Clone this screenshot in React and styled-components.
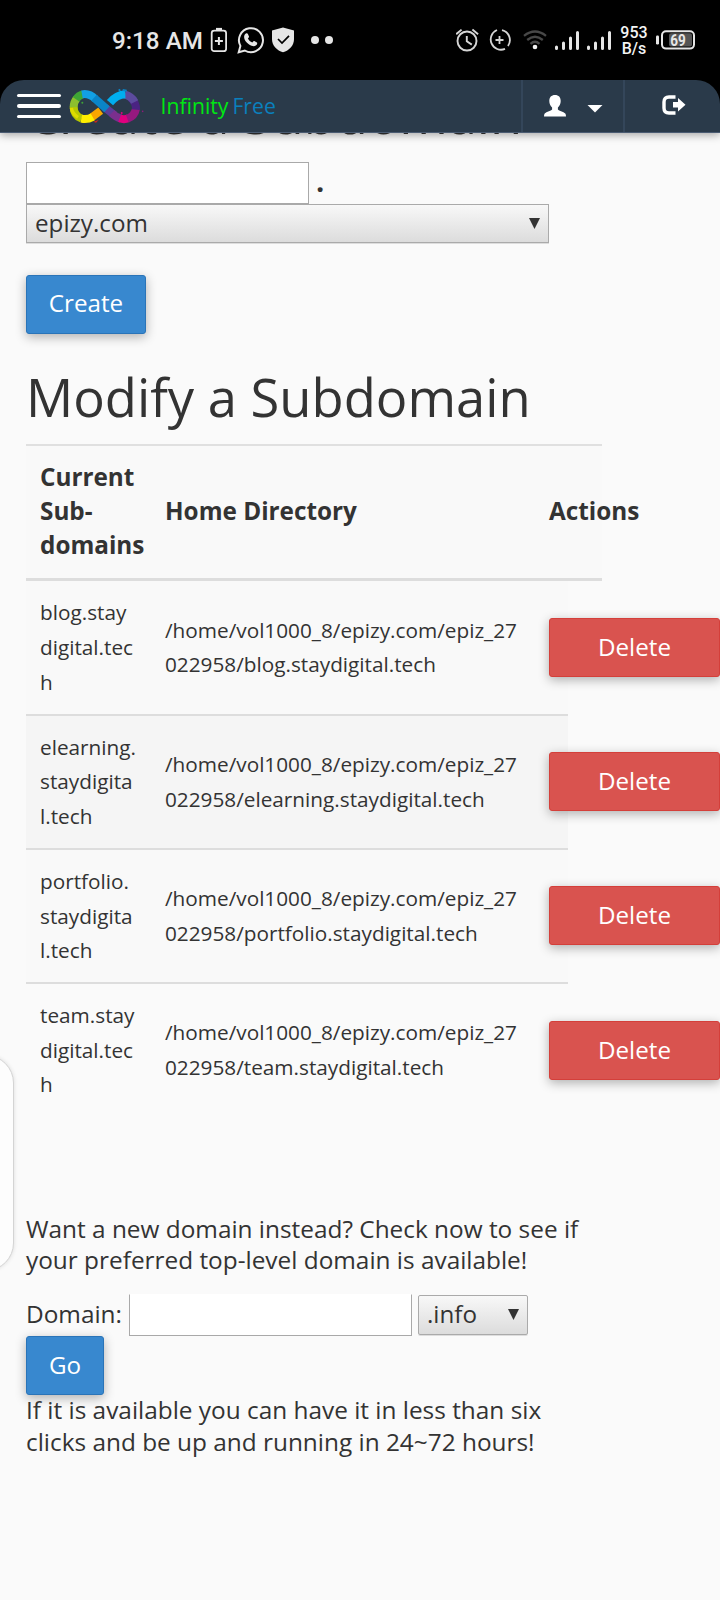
import React from 'react';
import styled, { createGlobalStyle } from 'styled-components';

const GlobalStyle = createGlobalStyle`
  * {
    box-sizing: border-box;
  }

  body {
    margin: 0;
    background: #fafafa;
    color: #333;
    font-family: 'Open Sans', 'Noto Sans', sans-serif;
    font-size: 24.39px;
  }
`;

const Screen = styled.div`
  position: relative;
  width: 720px;
  height: 1600px;
  overflow: hidden;
  background: #fafafa;
`;

// phone status bar

const StatusBar = styled.div`
  display: flex;
  align-items: center;
  justify-content: space-between;
  height: 80px;
  padding: 0 25px 0 112px;
  background: #000;
  color: #e6e6e6;
  font-family: Roboto, sans-serif;
`;

const StatusGroup = styled.div`
  display: flex;
  align-items: center;

  svg {
    display: block;
    flex: none;
    margin-left: 8px;
  }
`;

const Clock = styled.span`
  width: 90px;
  padding-top: 1px;
  font-size: 24.2px;
  font-weight: 500;
  line-height: 28px;
  white-space: nowrap;
`;

const Speed = styled.div`
  width: 28px;
  margin: 1px -1px 0 9px;
  color: #f4f4f4;
  font-size: 16px;
  font-weight: 500;
  line-height: 16px;
  text-align: center;
`;

function BatterySaver() {
  return (
    <svg width='19' height='26' viewBox='0 0 19 26' fill='none' stroke='#e6e6e6'>
      <rect x='1.7' y='3.6' width='14.4' height='20.6' rx='2.5' strokeWidth='1.8' />
      <path d='M6 2.2h6' strokeWidth='2.6' />
      <path d='M8.9 10v8M4.9 14h8' strokeWidth='2' />
    </svg>
  );
}

function WhatsApp() {
  return (
    <svg width='27' height='28' viewBox='0.5 0 27 28'>
      <path
        d='M2.2 26.2l1.7-6.3A12 12 0 1 1 8.3 24.5z'
        fill='none'
        stroke='#e6e6e6'
        strokeWidth='2'
      />
      <path
        d='M9.4 7.6c.7-.5 1.6-.5 2 .3l1.1 2.5c.2.6-.2 1.2-1.1 2.1 1 1.9 2.4 3.2 4.4 4.1.9-1.1 1.4-1.8 2-1.5l2.6 1.3c.6.4.3 1.9-.4 2.7-1.7 1.7-4.4 1.3-7.4-.6-3.2-2.1-5.1-5-5-7.6.1-1.5.8-2.6 1.8-3.3z'
        fill='#e6e6e6'
      />
    </svg>
  );
}

function Shield() {
  return (
    <svg width='22' height='26' viewBox='0 0 22 26'>
      <path d='M11 .5l11 3V12C22 19 17 23.5 11 25.2 5 23.5 0 19 0 12V3.5z' fill='#e6e6e6' />
      <path d='M6 12l4 4 7-7.2' fill='none' stroke='#000' strokeWidth='1.7' />
    </svg>
  );
}

function MoreDots() {
  return (
    <svg width='31' height='8' viewBox='0 0 31 8' fill='#e6e6e6'>
      <circle cx='13' cy='4' r='4' />
      <circle cx='27' cy='4' r='4' />
    </svg>
  );
}

function Alarm() {
  return (
    <svg width='24' height='24' viewBox='1 0 24 24' fill='none' stroke='#d6d6d6' strokeWidth='1.9'>
      <circle cx='12' cy='13' r='9.5' />
      <path d='M11.8 8v5.3l5 3.3M1.2 6.2l5.4-4.6M23.1 6.2l-5.7-4.6' />
    </svg>
  );
}

function DataSaver() {
  return (
    <svg width='27' height='24' viewBox='0.5 0 27 24' fill='none' stroke='#d6d6d6' strokeWidth='1.8'>
      <path d='M9.5 2a10.2 10.2 0 1 0 8 18.9M14.5 2.1a10.2 10.2 0 0 1 6 15.8' />
      <path d='M12 8v8M8 12h8' />
    </svg>
  );
}

function Wifi() {
  return (
    <svg width='24' height='22' viewBox='0 0 24 22' fill='none' stroke='#484848' strokeWidth='2.3'>
      <path d='M1 6.8Q12-1.8 23 6.8M4.2 11Q12 4.6 19.8 11M7.5 14.8Q12 10.8 16.5 14.8' />
      <circle cx='12' cy='18' r='2.3' fill='#f4f4f4' stroke='none' />
    </svg>
  );
}

function Signal() {
  return (
    <svg width='24' height='20' viewBox='0 0 24 20' stroke='#e6e6e6' strokeWidth='3' strokeLinecap='round'>
      <path d='M1.5 17v1.5M8.5 13v5.5M15.5 8v10.5M22.5 2.5v16' />
    </svg>
  );
}

function Battery() {
  return (
    <svg width='40' height='20' viewBox='0 0 40 20'>
      <rect x='1' y='5.5' width='3' height='9' rx='1.2' fill='#e6e6e6' />
      <rect x='7' y='1.2' width='32' height='17.4' rx='4' fill='none' stroke='#e6e6e6' strokeWidth='2' />
      <rect x='14' y='3.3' width='23' height='13.2' rx='2' fill='#555' />
      <text
        x='23'
        y='15.6'
        textAnchor='middle'
        textLength='15.5'
        lengthAdjust='spacingAndGlyphs'
        fill='#e6e6e6'
        fontFamily='Roboto, sans-serif'
        fontWeight='700'
        fontSize='16.5'
      >
        69
      </text>
    </svg>
  );
}

// site header

const HeaderBack = styled.div`
  position: relative;
  z-index: 1;
  background: linear-gradient(#000 0, #000 26px, transparent 26px);
`;

const Header = styled.header`
  display: flex;
  align-items: center;
  height: 53px;
  padding-left: 17px;
  border-bottom: 1px solid #4a5b72;
  border-radius: 24px 24px 0 0;
  background: #2a3a4a;
  box-shadow: 0 2px 8px rgba(0, 0, 0, 0.35);
`;

const Burger = styled.div`
  display: flex;
  flex-direction: column;
  gap: 7px;
  width: 44px;

  i {
    height: 3.5px;
    border-radius: 2px;
    background: #fff;
  }
`;

const LogoMark = styled.svg`
  width: 90px;
  height: 48px;
  margin-left: 3px;
`;

const Brand = styled.div`
  display: flex;
  flex: 1;
  gap: 4px;
  margin-left: 6.5px;
  color: #00e713;
  font-size: 21.2px;
  line-height: 28px;
  white-space: nowrap;

  em {
    color: #0a80bd;
    font-style: normal;
  }
`;

const HeaderItem = styled.div`
  display: flex;
  align-items: center;
  justify-content: center;
  gap: 21px;
  width: ${({ width }) => width}px;
  height: 100%;
  border-left: 2px solid #34465a;
`;

const ribbon = [
  ['#f7a600', 'M110 86L82 107'],
  ['#b8c800', 'M53 110Q29 100 29 74'],
  ['#ffed00', 'M86 105Q70 114 52 110'],
  ['#8dbf2e', 'M29 76Q29 60 38 50'],
  ['#3fa535', 'M36 52Q44 40 56 37'],
  ['#5a3d99', 'M122 76L152 100'],
  ['#12a0e4', 'M54 37Q76 33 94 51'],
  ['#0a84c8', 'M90 47L129 82'],
  ['#7a2f8e', 'M143 93Q156 106 171 110'],
  ['#e0007f', 'M167 109Q180 114 193 109'],
  ['#95197f', 'M190 110Q212 102 216 80'],
  ['#4a2382', 'M216 83Q218 65 200 47'],
  ['#5c4b9e', 'M212 60Q204 44 182 37'],
  ['#00aeef', 'M138 62Q158 38 184 37'],
];

function Logo() {
  return (
    <LogoMark viewBox='0 0 270 144' fill='none'>
      {ribbon.map(([color, d]) => (
        <path key={d} d={d} stroke={color} strokeWidth='24' />
      ))}
      <path d='M42 106Q24 94 22 78' stroke='#dedc00' strokeWidth='10' />
      <path d='M88 119l16-5-8 8z' fill='#d4271e' />
      <path d='M176 24l12 2M164 26l5-3' stroke='#0a84c8' strokeWidth='6' />
      <circle cx='55' cy='62' r='3' fill='#3fa535' />
      <circle cx='173' cy='93' r='3' fill='#e0007f' />
      <circle cx='236' cy='88' r='2.5' fill='#95197f' />
    </LogoMark>
  );
}

function UserIcon() {
  return (
    <svg width='22' height='22' viewBox='0 0 22 22' fill='#fff'>
      <path d='M11 0c3.7 0 5.7 2.3 5.7 6 0 2.8-1.2 5.2-2.8 6.6v1.8c0 .8 6 2.2 7.4 4.2.5.8.7 1.8.7 2.9H0c0-1.1.2-2.1.7-2.9 1.4-2 7.4-3.4 7.4-4.2v-1.8C6.5 11.2 5.3 8.8 5.3 6c0-3.7 2-6 5.7-6z' />
    </svg>
  );
}

function CaretIcon() {
  return (
    <svg width='16' height='14' viewBox='0 0 16 14' fill='#fff'>
      <path d='M.5 6h15L8 13.5z' />
    </svg>
  );
}

function LogoutIcon() {
  return (
    <svg width='26' height='22' viewBox='-2 0 26 22'>
      <path d='M13.5 2H7Q2 2 2 7v6q0 5 5 5h6.5' fill='none' stroke='#fff' strokeWidth='3.4' />
      <path d='M11 7h5V3l7.5 6.8L16 16.5v-4h-5z' fill='#fff' />
    </svg>
  );
}

// page

const Content = styled.main`
  height: 1467px;
  padding: 0 0 0 26px;
  overflow: hidden;
`;

const Title = styled.h1`
  margin: ${({ top }) => top}px 0 0;
  font-size: 52.5px;
  font-weight: 400;
  line-height: 60px;
  letter-spacing: ${({ tracking }) => tracking || 0}px;
  white-space: nowrap;
`;

const TextInput = styled.input`
  display: block;
  width: 283px;
  height: 42px;
  padding: 0 8px;
  border: 1px solid #a9a9a9;
  ${({ flat }) => flat && 'border-top-color: #fff;'}
  border-radius: 0;
  background: #fff;
  outline: none;
`;

const SubdomainRow = styled.div`
  display: flex;
  margin-top: 18px;
`;

const Dot = styled.span`
  margin-left: 7px;
  font-size: 29px;
  font-weight: 700;
  line-height: 37px;
`;

const SelectBox = styled.div`
  display: flex;
  align-items: center;
  justify-content: space-between;
  width: ${({ width }) => width}px;
  height: ${({ height }) => height || 39}px;
  padding: 0 ${({ end }) => end}px 3px 8px;
  border: 1px solid #aaa;
  border-radius: ${({ radius }) => radius || 0}px;
  background: linear-gradient(#f8f8f8, #dcdcdc);
  box-shadow: 0 1px 0 #ddd;
  font-size: 24.2px;

  svg {
    display: block;
    margin-top: 2px;
  }
`;

function Select({ value, ...rest }) {
  return (
    <SelectBox {...rest}>
      <span>{value}</span>
      <svg width='11' height='11' viewBox='0 0 11 11' fill='#333'>
        <path d='M0 0h11L5.5 11z' />
      </svg>
    </SelectBox>
  );
}

const Button = styled.button`
  display: block;
  width: ${({ width }) => width}px;
  height: 59px;
  margin: 0;
  padding: 0 0 2px;
  border: 1px solid ${({ danger }) => (danger ? '#d43f3a' : '#2a74b8')};
  border-radius: 3px;
  background: ${({ danger }) => (danger ? '#d9534f' : '#3888cf')};
  box-shadow: 0 3px 11px rgba(0, 0, 0, 0.3);
  color: #fff;
  font-family: inherit;
  font-size: 24.2px;
`;

const CreateButton = styled(Button)`
  margin-top: 32px;
  padding-bottom: 4px;
`;

const Table = styled.div`
  margin-top: 17px;
`;

const Row = styled.div`
  display: grid;
  grid-template-columns: 125px 384px 20px;
  align-items: center;
  width: 542px;
  height: 134.2px;
  padding-left: 14px;
  border-bottom: 2px solid ${({ last }) => (last ? 'transparent' : '#ddd')};
  background: ${({ stripe }) => stripe};
  font-size: 20.75px;
  line-height: 34.7px;
`;

const HeadRow = styled(Row)`
  width: 575.5px;
  height: 137.4px;
  padding-bottom: 2px;
  border-top: 2px solid #e0e0e0;
  border-bottom: 3px solid #ddd;
  background: #f9f9f9;
  font-size: 24.3px;
  font-weight: 700;
  line-height: 34.4px;
`;

const Cell = styled.div`
  white-space: pre-line;
`;

const Paragraph = styled.p`
  margin: ${({ top }) => top}px 0 0;
  line-height: ${({ leading }) => leading}px;
  white-space: nowrap;
`;

const DomainRow = styled.div`
  display: flex;
  align-items: center;
  height: 42px;
  margin-top: 19px;
`;

const DomainLabel = styled.label`
  width: 103px;
  padding-bottom: 3px;
`;

const Gap = styled.span`
  width: 6px;
`;

const SideHandle = styled.div`
  position: absolute;
  left: -60px;
  top: 1055px;
  width: 74px;
  height: 216px;
  border: 1px solid #d4d4d4;
  border-radius: 28px;
  background: #fdfdfd;
  box-shadow: 0 0 4px rgba(0, 0, 0, 0.12);
`;

const subdomains = [
  { name: 'blog.stay\ndigital.tec\nh', dir: 'blog.staydigital.tech', stripe: '#f9f9f9' },
  { name: 'elearning.\nstaydigita\nl.tech', dir: 'elearning.staydigital.tech', stripe: '#f5f5f5' },
  { name: 'portfolio.\nstaydigita\nl.tech', dir: 'portfolio.staydigital.tech', stripe: '#f9f9f9' },
  { name: 'team.stay\ndigital.tec\nh', dir: 'team.staydigital.tech', stripe: '#fafafa' },
];

export default function App() {
  return (
    <Screen>
      <GlobalStyle />
      <StatusBar>
        <StatusGroup>
          <Clock>9:18 AM</Clock>
          <BatterySaver />
          <WhatsApp />
          <Shield />
          <MoreDots />
        </StatusGroup>
        <StatusGroup>
          <Alarm />
          <DataSaver />
          <Wifi />
          <Signal />
          <Signal />
          <Speed>
            953
            <br />
            B/s
          </Speed>
          <Battery />
        </StatusGroup>
      </StatusBar>

      <HeaderBack>
        <Header>
          <Burger>
            <i />
            <i />
            <i />
          </Burger>
          <Logo />
          <Brand>
            <span>Infinity</span>
            <em>Free</em>
          </Brand>
          <HeaderItem width={102}>
            <UserIcon />
            <CaretIcon />
          </HeaderItem>
          <HeaderItem width={97}>
            <LogoutIcon />
          </HeaderItem>
        </Header>
      </HeaderBack>

      <Content>
        <Title top={-49} tracking={-0.1}>
          Create a Subdomain
        </Title>
        <SubdomainRow>
          <TextInput />
          <Dot>.</Dot>
        </SubdomainRow>
        <Select value='epizy.com' width={523} end={8} />
        <CreateButton width={120}>Create</CreateButton>

        <Title top={33}>Modify a Subdomain</Title>
        <Table>
          <HeadRow>
            <Cell>{'Current\nSub-\ndomains'}</Cell>
            <Cell>Home Directory</Cell>
            <Cell>Actions</Cell>
          </HeadRow>
          {subdomains.map(({ name, dir, stripe }, i) => (
            <Row key={dir} stripe={stripe} last={i === subdomains.length - 1}>
              <Cell>{name}</Cell>
              <Cell>{`/home/vol1000_8/epizy.com/epiz_27\n022958/${dir}`}</Cell>
              <Button danger width={171}>
                Delete
              </Button>
            </Row>
          ))}
        </Table>

        <Paragraph top={94.7} leading={31}>
          Want a new domain instead? Check now to see if
          <br />
          your preferred top-level domain is available!
        </Paragraph>
        <DomainRow>
          <DomainLabel>Domain:</DomainLabel>
          <TextInput flat />
          <Gap />
          <Select value='.info' width={110} height={40} end={8} radius={2} />
        </DomainRow>
        <Button width={78}>Go</Button>
        <Paragraph top={-1} leading={32}>
          If it is available you can have it in less than six
          <br />
          clicks and be up and running in 24~72 hours!
        </Paragraph>
      </Content>
      <SideHandle />
    </Screen>
  );
}
